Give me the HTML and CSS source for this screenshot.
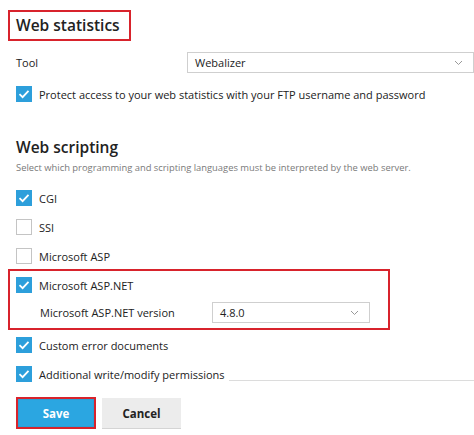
FILE: index.html
```html
<!DOCTYPE html>
<html>
<head>
<meta charset="utf-8">
<link rel="stylesheet" href="styles.css">
</head>
<body>
<div class="page">
  <div class="hl hl-title"><h1 class="title">Web statistics</h1></div>
  <div class="field-row tool-row">
    <span class="label tool-label">Tool</span>
    <div class="select select-wide"><span>Webalizer</span>
      <svg class="chev" width="9" height="6" viewBox="0 0 9 6"><path d="M1 1 L4.5 4.5 L8 1" fill="none" stroke="#999" stroke-width="1"/></svg>
    </div>
  </div>
  <div class="check-row protect-row"><span class="cb on"><svg viewBox="0 0 16 16" width="16" height="16"><path d="M3.5 8.2 L6.6 11.2 L12.5 4.8" fill="none" stroke="#fff" stroke-width="1.8"/></svg></span><span class="label">Protect access to your web statistics with your FTP username and password</span></div>

  <h2 class="title title2">Web scripting</h2>
  <p class="desc">Select which programming and scripting languages must be interpreted by the web server.</p>

  <div class="check-row r-cgi"><span class="cb on"><svg viewBox="0 0 16 16" width="16" height="16"><path d="M3.5 8.2 L6.6 11.2 L12.5 4.8" fill="none" stroke="#fff" stroke-width="1.8"/></svg></span><span class="label">CGI</span></div>
  <div class="check-row r-next"><span class="cb"></span><span class="label">SSI</span></div>
  <div class="check-row r-next"><span class="cb"></span><span class="label">Microsoft ASP</span></div>

  <div class="hl hl-asp">
    <div class="check-row"><span class="cb on"><svg viewBox="0 0 16 16" width="16" height="16"><path d="M3.5 8.2 L6.6 11.2 L12.5 4.8" fill="none" stroke="#fff" stroke-width="1.8"/></svg></span><span class="label">Microsoft ASP.NET</span></div>
    <div class="field-row version-row">
      <span class="label version-label">Microsoft ASP.NET version</span>
      <div class="select select-small"><span>4.8.0</span>
        <svg class="chev" width="9" height="6" viewBox="0 0 9 6"><path d="M1 1 L4.5 4.5 L8 1" fill="none" stroke="#999" stroke-width="1"/></svg>
      </div>
    </div>
  </div>

  <div class="check-row r-custom"><span class="cb on"><svg viewBox="0 0 16 16" width="16" height="16"><path d="M3.5 8.2 L6.6 11.2 L12.5 4.8" fill="none" stroke="#fff" stroke-width="1.8"/></svg></span><span class="label">Custom error documents</span></div>
  <div class="check-row r-next r-last"><span class="cb on"><svg viewBox="0 0 16 16" width="16" height="16"><path d="M3.5 8.2 L6.6 11.2 L12.5 4.8" fill="none" stroke="#fff" stroke-width="1.8"/></svg></span><span class="label">Additional write/modify permissions</span><span class="rule"></span></div>

  <div class="buttons">
    <button class="btn btn-save">Save</button>
    <button class="btn btn-cancel">Cancel</button>
  </div>
</div>
</body>
</html>
```
FILE: styles.css
```css
html, body {
  margin: 0;
  padding: 0;
  background: #fff;
}
body {
  font-family: "Open Sans", "Noto Sans", sans-serif;
  color: #222;
  font-size: 11px;
  width: 474px;
  height: 435px;
  overflow: hidden;
  white-space: nowrap;
}
.page {
  padding: 10px 0 0 16px;
}
.hl {
  border: 2px solid #d8232c;
  margin-left: -8px;
  padding-left: 6px;
}
.hl-title {
  width: 113px;
  height: 27px;
  box-sizing: content-box;
}
.title {
  margin: 0;
  font-size: 15.5px;
  font-weight: 600;
  line-height: 27px;
  color: #222;
}
.field-row {
  display: flex;
  align-items: center;
}
.tool-row {
  margin-top: 11px;
}
.tool-label {
  width: 171px;
}
.select {
  box-sizing: border-box;
  border: 1px solid #cfcfcf;
  background: #fff;
  display: flex;
  align-items: center;
  justify-content: space-between;
  padding: 0 10px 0 7px;
  font-size: 11px;
}
.select-wide {
  width: 287px;
  height: 21px;
}
.chev {
  display: block;
}
.check-row {
  display: flex;
  align-items: center;
  height: 20px;
  gap: 7px;
}
.cb {
  box-sizing: border-box;
  width: 16px;
  height: 16px;
  border: 1px solid #c4c4c4;
  background: #fff;
  flex: none;
  display: block;
}
.cb svg { display: block; margin: -1px; }
.cb.on {
  background: #2d9fdb;
  border-color: #2d9fdb;
}
.protect-row {
  margin-top: 11px;
}
.title2 {
  margin-top: 31px;
  line-height: 24px;
}
.desc {
  margin: 1px 0 0;
  font-size: 9.4px;
  line-height: 16px;
  color: #7a7a7a;
}
.r-cgi { margin-top: 12px; }
.r-next { margin-top: 9px; }
.hl-asp {
  margin-top: 3px;
  width: 372px;
  padding-top: 4px;
  padding-bottom: 5px;
}
.version-row {
  margin-top: 7px;
  padding-left: 24px;
}
.version-label {
  width: 172px;
}
.select-small {
  width: 158px;
  height: 21px;
}
.r-custom { margin-top: 5px; }
.r-last {
  align-items: flex-start;
}
.r-last .cb, .r-last .label { align-self: center; }
.rule {
  flex: 1;
  align-self: flex-end;
  border-bottom: 1px solid #dcdcdc;
  margin-bottom: 3px;
  margin-left: -3px;
}
.buttons {
  display: flex;
  align-items: flex-start;
  gap: 6px;
  margin-top: 13px;
}
.btn {
  font-family: "Open Sans", "Noto Sans", sans-serif;
  font-size: 11.5px;
  font-weight: 700;
  margin: 0;
  padding: 0;
  cursor: pointer;
}
.btn-save {
  box-sizing: border-box;
  width: 80px;
  height: 32px;
  background: #2ba6e1;
  color: #fff;
  border: 2px solid #d8232c;
  box-shadow: inset 0 0 0 1px #2a9fd6;
}
.btn-cancel {
  box-sizing: border-box;
  width: 79px;
  height: 31px;
  margin-top: 1px;
  background: #ececec;
  color: #222;
  border: 0;
  border-bottom: 1px solid #d4d4d4;
}
```
